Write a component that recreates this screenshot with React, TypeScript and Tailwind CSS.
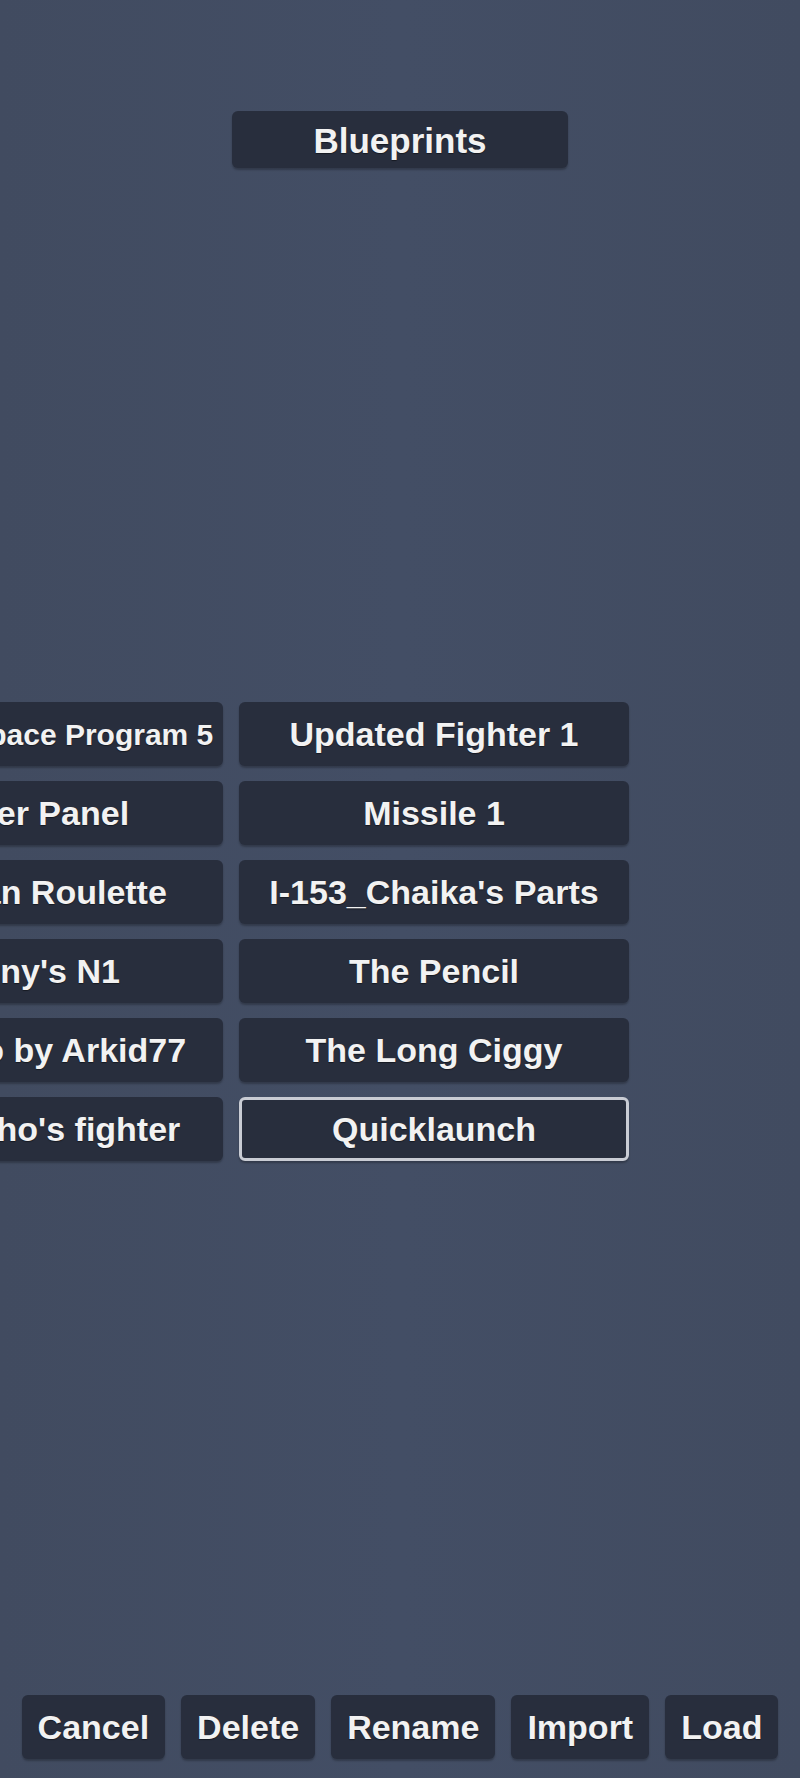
import React from 'react'

const leftColumn = [
  { name: "Kerbal's Space Program 5", size: 'text-[30px]' },
  { name: 'Power Panel', size: 'text-[34px]' },
  { name: 'Russian Roulette', size: 'text-[34px]' },
  { name: "Danny's N1", size: 'text-[34px]' },
  { name: 'Dynamo by Arkid77', size: 'text-[34px]' },
  { name: "Sir Macho's fighter", size: 'text-[34px]' },
]

const rightColumn = [
  'Updated Fighter 1',
  'Missile 1',
  "I-153_Chaika's Parts",
  'The Pencil',
  'The Long Ciggy',
  'Quicklaunch',
]

const actions = ['Cancel', 'Delete', 'Rename', 'Import', 'Load']

function Tile({ label, size = 'text-[34px]', selected = false }: { label: string; size?: string; selected?: boolean }) {
  return (
    <button
      className={`h-[64px] w-[390px] rounded-md bg-[#282e3d] font-bold text-[#f2f2f2] whitespace-nowrap flex items-center justify-center overflow-visible shadow-[0_2px_2px_rgba(0,0,0,0.25)] [text-shadow:0_1px_1px_rgba(0,0,0,0.45)] ${size} ${
        selected ? 'border-[3px] border-[#c9ccd4]' : ''
      }`}
    >
      {label}
    </button>
  )
}

export default function App() {
  return (
    <div
      className="h-[1778px] w-full overflow-hidden flex flex-col bg-[#424c62] bg-gradient-to-r from-[#414b60] via-[#434e65] to-[#414b60]"
      style={{ fontFamily: '"Liberation Sans", Arial, sans-serif' }}
    >
      <div className="pt-[111px] flex justify-center">
        <div className="w-[336px] h-[57px] pt-[3px] rounded-md bg-[#282e3d] flex items-center justify-center text-[35px] font-bold text-[#f2f2f2] shadow-[0_2px_2px_rgba(0,0,0,0.25)] [text-shadow:0_1px_1px_rgba(0,0,0,0.45)]">
          Blueprints
        </div>
      </div>

      {/* list is scrolled sideways, left column runs off the screen */}
      <div className="flex-1 flex items-center">
        <div className="ml-[-167px] grid grid-cols-[390px_390px] gap-x-4 gap-y-[15px]">
          {leftColumn.map((item, i) => (
            <React.Fragment key={item.name}>
              <Tile label={item.name} size={item.size} />
              <Tile label={rightColumn[i]} selected={rightColumn[i] === 'Quicklaunch'} />
            </React.Fragment>
          ))}
        </div>
      </div>

      <div className="flex justify-center gap-4 pb-[19px]">
        {actions.map((a) => (
          <button
            key={a}
            className="h-[64px] px-4 rounded-md bg-[#282e3d] text-[34px] font-bold text-[#f2f2f2] shadow-[0_2px_2px_rgba(0,0,0,0.25)] [text-shadow:0_1px_1px_rgba(0,0,0,0.45)]"
          >
            {a}
          </button>
        ))}
      </div>
    </div>
  )
}
